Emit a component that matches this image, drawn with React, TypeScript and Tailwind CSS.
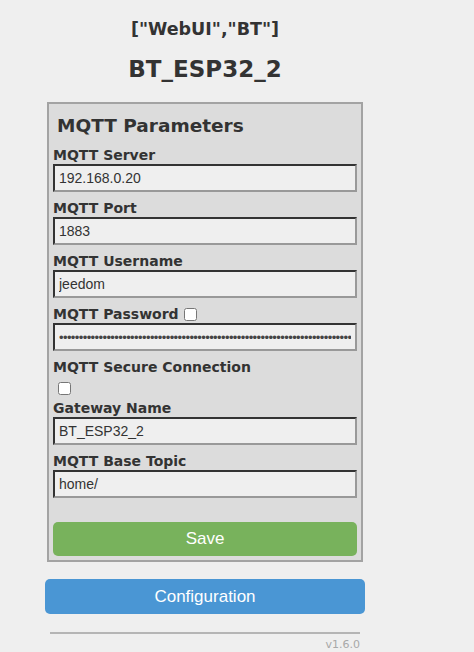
import React from "react";

const heading = { fontFamily: '"DejaVu Sans", Verdana, sans-serif' };

function Field({ label, value, children }: { label: string; value?: string; children?: React.ReactNode }) {
    return (
        <div className="mb-[7px]">
            <div className="h-[18px] flex items-center text-[14px] font-bold text-[#333] leading-[18px]">
                {label}
                {children}
            </div>
            {value !== undefined && (
                <input
                    readOnly
                    value={value}
                    className="block w-full h-[28px] px-[4px] bg-[#efefef] border-2 border-t-[#333] border-l-[#333] border-b-[#999] border-r-[#999] text-[14px] text-[#333] outline-none font-['Liberation_Sans',Arial,sans-serif]"
                />
            )}
        </div>
    );
}

export default function App() {
    return (
        <div className="min-h-[652px] bg-[#efefef] pt-[19px]" style={heading}>
            <div className="ml-[45px] w-[320px]">
                <h2 className="text-center text-[17.5px] leading-[20px] font-bold text-[#333]">["WebUI","BT"]</h2>
                <h1 className="mt-[16px] text-center text-[23px] leading-[28px] font-bold text-[#333]">BT_ESP32_2</h1>

                {/* MQTT form */}
                <div className="mt-[19px] mx-[2px] bg-[#dcdcdc] border-2 border-[#a3a3a3] px-[4px] pt-[10px] pb-[4px]">
                    <div className="px-[4px] text-[18.5px] leading-[24px] font-bold text-[#333] mb-[8px]">MQTT Parameters</div>
                    <Field label="MQTT Server" value="192.168.0.20" />
                    <Field label="MQTT Port" value="1883" />
                    <Field label="MQTT Username" value="jeedom" />
                    <div className="mb-[7px]">
                        <div className="h-[18px] flex items-center text-[14px] font-bold text-[#333]">
                            MQTT Password
                            <input type="checkbox" readOnly className="ml-[5px] w-[13px] h-[13px]" />
                        </div>
                        <input
                            type="password"
                            readOnly
                            value={"x".repeat(90)}
                            className="block w-full h-[28px] px-[4px] bg-[#efefef] border-2 border-t-[#333] border-l-[#333] border-b-[#999] border-r-[#999] text-[13px] text-[#444] outline-none tracking-[-0.6px] font-['Liberation_Sans',Arial,sans-serif]"
                        />
                    </div>
                    <div className="h-[18px] flex items-center text-[14px] font-bold text-[#333]">MQTT Secure Connection</div>
                    <div className="h-[23px] pt-[2px] pl-[5px]">
                        <input type="checkbox" readOnly className="w-[13px] h-[13px] m-0" />
                    </div>
                    <Field label="Gateway Name" value="BT_ESP32_2" />
                    <Field label="MQTT Base Topic" value="home/" />
                    <button className="mt-[24px] block w-full h-[34px] rounded-[5px] bg-[#78b25c] text-white text-[17px] font-['Liberation_Sans',Arial,sans-serif]">
                        Save
                    </button>
                </div>

                <button className="mt-[17px] block w-full h-[35px] rounded-[5px] bg-[#4a96d4] text-white text-[17px] font-['Liberation_Sans',Arial,sans-serif]">
                    Configuration
                </button>

                <div className="mt-[18px] mx-[5px] border-t-2 border-[#b5b5b5]" />
                <div className="mx-[5px] mt-[3px] text-right text-[11px] text-[#a8a8a8]">v1.6.0</div>
            </div>
        </div>
    );
}
